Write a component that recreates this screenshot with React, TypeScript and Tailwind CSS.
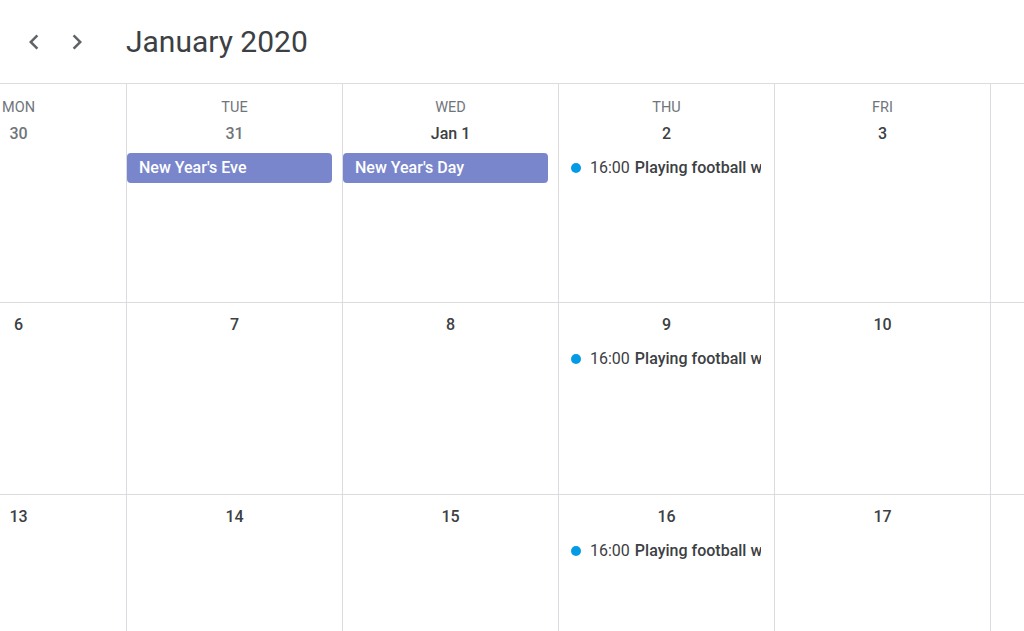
import React from "react";

type Ev = { kind: "chip"; title: string } | { kind: "timed"; time: string; title: string };

type Cell = { date: string; muted?: boolean; events?: Ev[] };

const weekdays = ["MON", "TUE", "WED", "THU", "FRI", "", ""];

const football: Ev = { kind: "timed", time: "16:00", title: "Playing football with friends" };

const rows: Cell[][] = [
  [
    { date: "30", muted: true },
    { date: "31", muted: true, events: [{ kind: "chip", title: "New Year's Eve" }] },
    { date: "Jan 1", events: [{ kind: "chip", title: "New Year's Day" }] },
    { date: "2", events: [football] },
    { date: "3" },
    { date: "" },
    { date: "" },
  ],
  [
    { date: "6" },
    { date: "7" },
    { date: "8" },
    { date: "9", events: [football] },
    { date: "10" },
    { date: "" },
    { date: "" },
  ],
  [
    { date: "13" },
    { date: "14" },
    { date: "15" },
    { date: "16", events: [football] },
    { date: "17" },
    { date: "" },
    { date: "" },
  ],
];

function EventItem({ ev }: { ev: Ev }) {
  if (ev.kind === "chip") {
    return (
      <div className="mr-[10px] h-[30px] rounded-[4px] bg-[#7986cb] pl-[12px] flex items-center text-white text-[16px] font-medium whitespace-nowrap overflow-hidden">
        {ev.title}
      </div>
    );
  }
  return (
    <div className="mr-[13px] h-[30px] pl-[12px] flex items-center whitespace-nowrap overflow-hidden text-[16px] text-[#3c4043]">
      <span className="inline-block w-[10px] h-[10px] rounded-full bg-[#039be5] shrink-0" />
      <span className="ml-[9px]">{ev.time}</span>
      <span className="ml-[5px] font-medium">{ev.title}</span>
    </div>
  );
}

export default function App() {
  return (
    <div
      className="w-[1024px] h-[631px] overflow-hidden bg-white"
      style={{ fontFamily: "Roboto, 'Liberation Sans', Arial, sans-serif" }}
    >
      <div className="h-[84px] border-b border-[#dadce0] flex items-center pl-[14px]">
        <button className="w-[40px] h-[40px] flex items-center justify-center">
          <svg width="30" height="30" viewBox="0 0 24 24" fill="#5f6368">
            <path d="M15.41 7.41L14 6l-6 6 6 6 1.41-1.41L10.83 12z" />
          </svg>
        </button>
        <button className="ml-[3px] w-[40px] h-[40px] flex items-center justify-center">
          <svg width="30" height="30" viewBox="0 0 24 24" fill="#5f6368">
            <path d="M10 6L8.59 7.41 13.17 12l-4.58 4.59L10 18l6-6z" />
          </svg>
        </button>
        <div className="ml-[29px] text-[30px] leading-[40px] text-[#3c4043]">January 2020</div>
      </div>
      <div className="ml-[-89px] w-[1512px]">
        {rows.map((row, ri) => (
          <div
            key={ri}
            className={
              "flex border-b border-[#dadce0] " + (ri === 0 ? "h-[219px]" : "h-[192px]")
            }
          >
            {row.map((cell, ci) => (
              <div
                key={ci}
                className={
                  "w-[216px] shrink-0 border-r border-[#dadce0] flex flex-col " +
                  (ri === 0 ? "pt-[14px]" : "pt-[10px]")
                }
              >
                {ri === 0 && (
                  <div className="h-[20px] leading-[20px] text-center text-[14.5px] text-[#70757a]">
                    {weekdays[ci]}
                  </div>
                )}
                <div
                  className={
                    "h-[24px] leading-[24px] text-center text-[16px] font-medium " +
                    (ri === 0 ? "mt-[4px] " : "") +
                    (cell.muted ? "text-[#70757a]" : "text-[#3c4043]")
                  }
                >
                  {cell.date}
                </div>
                <div className="mt-[7px] flex flex-col gap-[2px]">
                  {(cell.events || []).map((ev, ei) => (
                    <EventItem key={ei} ev={ev} />
                  ))}
                </div>
              </div>
            ))}
          </div>
        ))}
      </div>
    </div>
  );
}
